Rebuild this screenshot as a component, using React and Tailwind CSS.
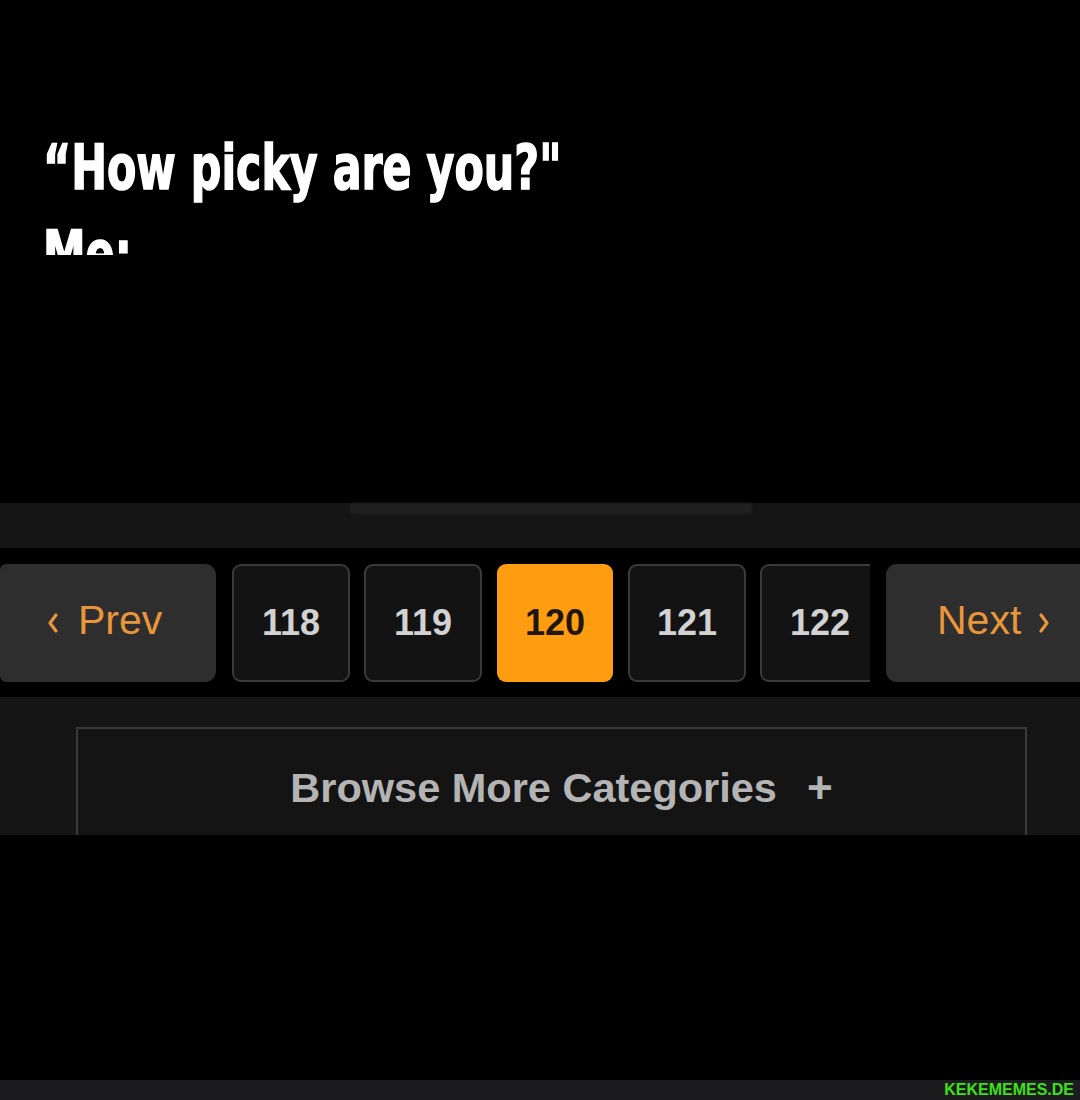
import React from "react";

// pager button chevrons
const Chevron = ({ dir = "left" }) => (
  <svg width="14" height="24" viewBox="0 0 14 24" className="shrink-0">
    <path
      d={dir === "left" ? "M10 4 L4 12 L10 20" : "M4 4 L10 12 L4 20"}
      fill="none"
      stroke="#e8963a"
      strokeWidth="3.2"
      strokeLinecap="round"
      strokeLinejoin="round"
    />
  </svg>
);

const PageBox = ({ n, active, clipped }) => (
  <div
    className={`h-[118px] flex items-center justify-center shrink-0 font-['Liberation_Sans',Arial,sans-serif] font-bold text-[36px] ${
      active
        ? "w-[116px] rounded-[9px] bg-[#ff9c10] text-[#21160a]"
        : clipped
        ? "w-[110px] rounded-l-[9px] border-2 border-r-0 border-[#3a3a3a] bg-[#131313] text-[#d2d2d2] pl-[8px]"
        : "w-[118px] rounded-[9px] border-2 border-[#3a3a3a] bg-[#131313] text-[#d2d2d2]"
    }`}
  >
    {n}
  </div>
);

export default function App() {
  return (
    <div className="w-[1080px] h-[1100px] bg-black flex flex-col overflow-hidden">
      {/* caption */}
      <div className="h-[255px] overflow-hidden pl-[43px] pt-[125px] shrink-0">
        <div className="origin-left scale-x-[0.755] font-['DejaVu_Sans_Condensed','DejaVu_Sans',sans-serif] font-bold text-white text-[63px] leading-[86px] whitespace-nowrap [-webkit-text-stroke:1.5px_white]">
          <div>“How picky are you?"</div>
          <div>Me:</div>
        </div>
      </div>

      <div className="h-[248px] shrink-0" />

      {/* pager panel */}
      <div className="h-[332px] shrink-0 flex flex-col">
        <div className="h-[45px] bg-[#151515] pl-[350px]">
          <div className="w-[402px] h-[11px] bg-[#202020] rounded-b-[3px] blur-[1px]" />
        </div>

        <div className="h-[149px] py-[15px] flex items-center overflow-hidden">
          <div className="w-[216px] h-[118px] shrink-0 rounded-r-[11px] rounded-l-[6px] bg-[#2e2e2e] flex items-center pl-[46px] gap-[18px] font-['Liberation_Sans',Arial,sans-serif] text-[41px] text-[#e8963a]">
            <Chevron dir="left" />
            <span className="-mt-[4px]">Prev</span>
          </div>
          <div className="w-[16px] shrink-0" />
          <PageBox n="118" />
          <div className="w-[14px] shrink-0" />
          <PageBox n="119" />
          <div className="w-[15px] shrink-0" />
          <PageBox n="120" active />
          <div className="w-[15px] shrink-0" />
          <PageBox n="121" />
          <div className="w-[14px] shrink-0" />
          <PageBox n="122" clipped />
          <div className="w-[16px] shrink-0" />
          <div className="w-[210px] h-[118px] shrink-0 rounded-l-[11px] bg-[#2e2e2e] flex items-center pl-[51px] gap-[16px] font-['Liberation_Sans',Arial,sans-serif] text-[41px] text-[#e8963a]">
            <span className="-mt-[4px]">Next</span>
            <Chevron dir="right" />
          </div>
        </div>

        <div className="flex-1 bg-[#151515] pt-[30px] pl-[76px] overflow-hidden">
          <div className="w-[951px] h-[120px] border-2 border-[#3a3a3a] bg-[#141414] flex justify-center pt-[34px] pl-[20px]">
            <div className="flex items-start gap-[30px] font-['Liberation_Sans',Arial,sans-serif] font-bold text-[41.5px] leading-[50px] text-[#b4b4b4]">
              <span>Browse More Categories</span>
              <span className="text-[44px] leading-[50px]">+</span>
            </div>
          </div>
        </div>
      </div>

      <div className="flex-1" />

      {/* watermark strip */}
      <div className="h-[20px] shrink-0 bg-[#1c1c1e] flex items-center justify-end pr-[6px]">
        <span className="font-['Liberation_Sans',Arial,sans-serif] font-bold text-[16px] leading-[20px] text-[#3fe01a]">
          KEKEMEMES.DE
        </span>
      </div>
    </div>
  );
}
